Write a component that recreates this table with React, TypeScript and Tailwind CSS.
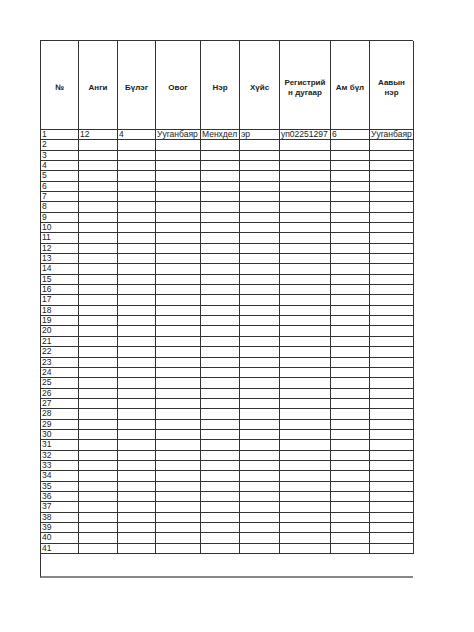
import React from "react";

const headers = ["№", "Анги", "Бүлэг", "Овог", "Нэр", "Хүйс", "Регистрий н дугаар", "Ам бүл", "Аавын нэр"];
const firstRow = ["1", "12", "4", "Ууганбаяр", "Менхдел", "эр", "уп02251297", "6", "Ууганбаяр"];

export default function App() {
    const rows = Array.from({ length: 41 }, (_, i) =>
        i === 0 ? firstRow : [String(i + 1), "", "", "", "", "", "", "", ""]
    );

    return (
        <div className="w-[474px] h-[632px] bg-white pt-[40px] pl-[40px] font-['Liberation_Sans',Arial,sans-serif] text-[#222]">
            <div className="w-[373px]">
                {/* Table */}
                <div className="grid grid-cols-[38px_39px_38px_45px_39px_40px_51px_39px_44px] grid-rows-[89px_repeat(41,minmax(0,1fr))] h-[514px] border-l border-t border-[#333]">
                    {headers.map((h, i) => (
                        <div
                            key={i}
                            className="border-r border-b border-[#333] flex items-center justify-center text-center text-[8px] font-bold leading-[10px] px-[3px] pt-[5px]"
                        >
                            {h}
                        </div>
                    ))}
                    {rows.map((row, r) =>
                        row.map((c, i) => (
                            <div
                                key={`${r}-${i}`}
                                className="border-r border-b border-[#333] text-[8.5px] leading-[9px] pl-px whitespace-nowrap overflow-visible"
                            >
                                {c}
                            </div>
                        ))
                    )}
                </div>
                {/* Footer area */}
                <div className="h-[24px] border-l border-[#333] border-b-2 border-b-[#888]" />
            </div>
        </div>
    );
}
